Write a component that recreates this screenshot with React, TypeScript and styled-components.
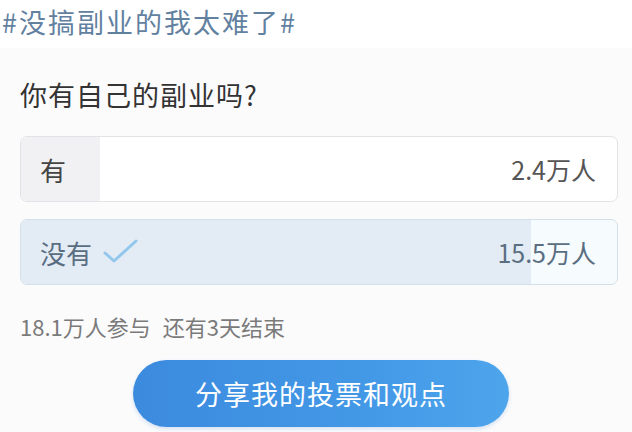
import React from 'react'
import styled, { createGlobalStyle } from 'styled-components'

const GlobalStyle = createGlobalStyle`
  html, body {
    margin: 0;
    padding: 0;
  }
  body {
    font-family: 'Noto Sans CJK SC', 'Noto Sans', sans-serif;
    background: #fbfbfc;
  }
`

const Page = styled.div`
  width: 632px;
  height: 432px;
  overflow: hidden;
  background: #fbfbfc;
  display: flex;
  flex-direction: column;
`

const Topic = styled.div`
  height: 48px;
  background: #ffffff;
  display: flex;
  align-items: center;
  padding: 0 0 6px 2px;
  box-sizing: border-box;
  font-size: 27px;
  letter-spacing: 2px;
  color: #62819f;
`

const Card = styled.div`
  display: flex;
  flex-direction: column;
  padding: 0 14px 0 20px;
`

const Question = styled.div`
  height: 40px;
  margin-top: 26px;
  display: flex;
  align-items: center;
  font-size: 27px;
  letter-spacing: 1px;
  color: #333333;
`

const Options = styled.div`
  display: flex;
  flex-direction: column;
  gap: 17px;
  margin-top: 22px;
`

const Option = styled.div<{ $chosen?: boolean }>`
  position: relative;
  height: 66px;
  border-radius: 7px;
  border: 1px solid ${({ $chosen }) => ($chosen ? '#d3e0ea' : '#e2e3e6')};
  background: ${({ $chosen }) => ($chosen ? '#f6fbfd' : '#ffffff')};
  box-sizing: border-box;
  overflow: hidden;
`

const Fill = styled.div<{ $chosen?: boolean }>`
  position: absolute;
  left: 0;
  top: 0;
  bottom: 0;
  background: ${({ $chosen }) => ($chosen ? '#e3ebf5' : '#f1f1f3')};
`

const OptionRow = styled.div`
  position: relative;
  height: 100%;
  display: flex;
  align-items: center;
  justify-content: space-between;
  padding: 0 21px 0 19px;
`

const Label = styled.div<{ $chosen?: boolean }>`
  display: flex;
  align-items: center;
  gap: 10px;
  font-size: 26px;
  color: ${({ $chosen }) => ($chosen ? '#5a6e82' : '#444444')};
`

const Count = styled.div<{ $chosen?: boolean }>`
  font-size: 25px;
  color: ${({ $chosen }) => ($chosen ? '#5a6e82' : '#555555')};
`

const Footer = styled.div`
  margin-top: 25px;
  font-size: 22px;
  color: #7a7a7a;
  display: flex;
  gap: 12px;
`

const ShareButton = styled.button`
  align-self: flex-start;
  margin: 18px 0 0 113px;
  width: 376px;
  height: 67px;
  border: none;
  border-radius: 34px;
  background: linear-gradient(90deg, #3b8ade 0%, #4398e6 60%, #4da5ec 100%);
  color: #ffffff;
  font-family: 'Noto Sans CJK SC', 'Noto Sans', sans-serif;
  font-size: 27px;
  letter-spacing: 1px;
  box-shadow: 0 2px 4px rgba(60, 120, 200, 0.2);
`

const CheckIcon = () => (
  <svg width="36" height="28" viewBox="0 0 36 28">
    <polyline
      points="3,15 12,23 34,3"
      fill="none"
      stroke="#93c7ec"
      strokeWidth="3"
      strokeLinecap="round"
      strokeLinejoin="round"
    />
  </svg>
)

const options = [
  { label: '有', value: 2.4, chosen: false },
  { label: '没有', value: 15.5, chosen: true },
]
const total = 18.1

const App = () => {
  return (
    <Page>
      <GlobalStyle />
      <Topic>#没搞副业的我太难了#</Topic>
      <Card>
        <Question>你有自己的副业吗?</Question>
        <Options>
          {options.map((o) => (
            <Option key={o.label} $chosen={o.chosen}>
              <Fill $chosen={o.chosen} style={{ width: `${(o.value / total) * 100}%` }} />
              <OptionRow>
                <Label $chosen={o.chosen}>
                  {o.label}
                  {o.chosen && <CheckIcon />}
                </Label>
                <Count $chosen={o.chosen}>{o.value}万人</Count>
              </OptionRow>
            </Option>
          ))}
        </Options>
        <Footer>
          <span>18.1万人参与</span>
          <span>还有3天结束</span>
        </Footer>
        <ShareButton>分享我的投票和观点</ShareButton>
      </Card>
    </Page>
  )
}

export default App
